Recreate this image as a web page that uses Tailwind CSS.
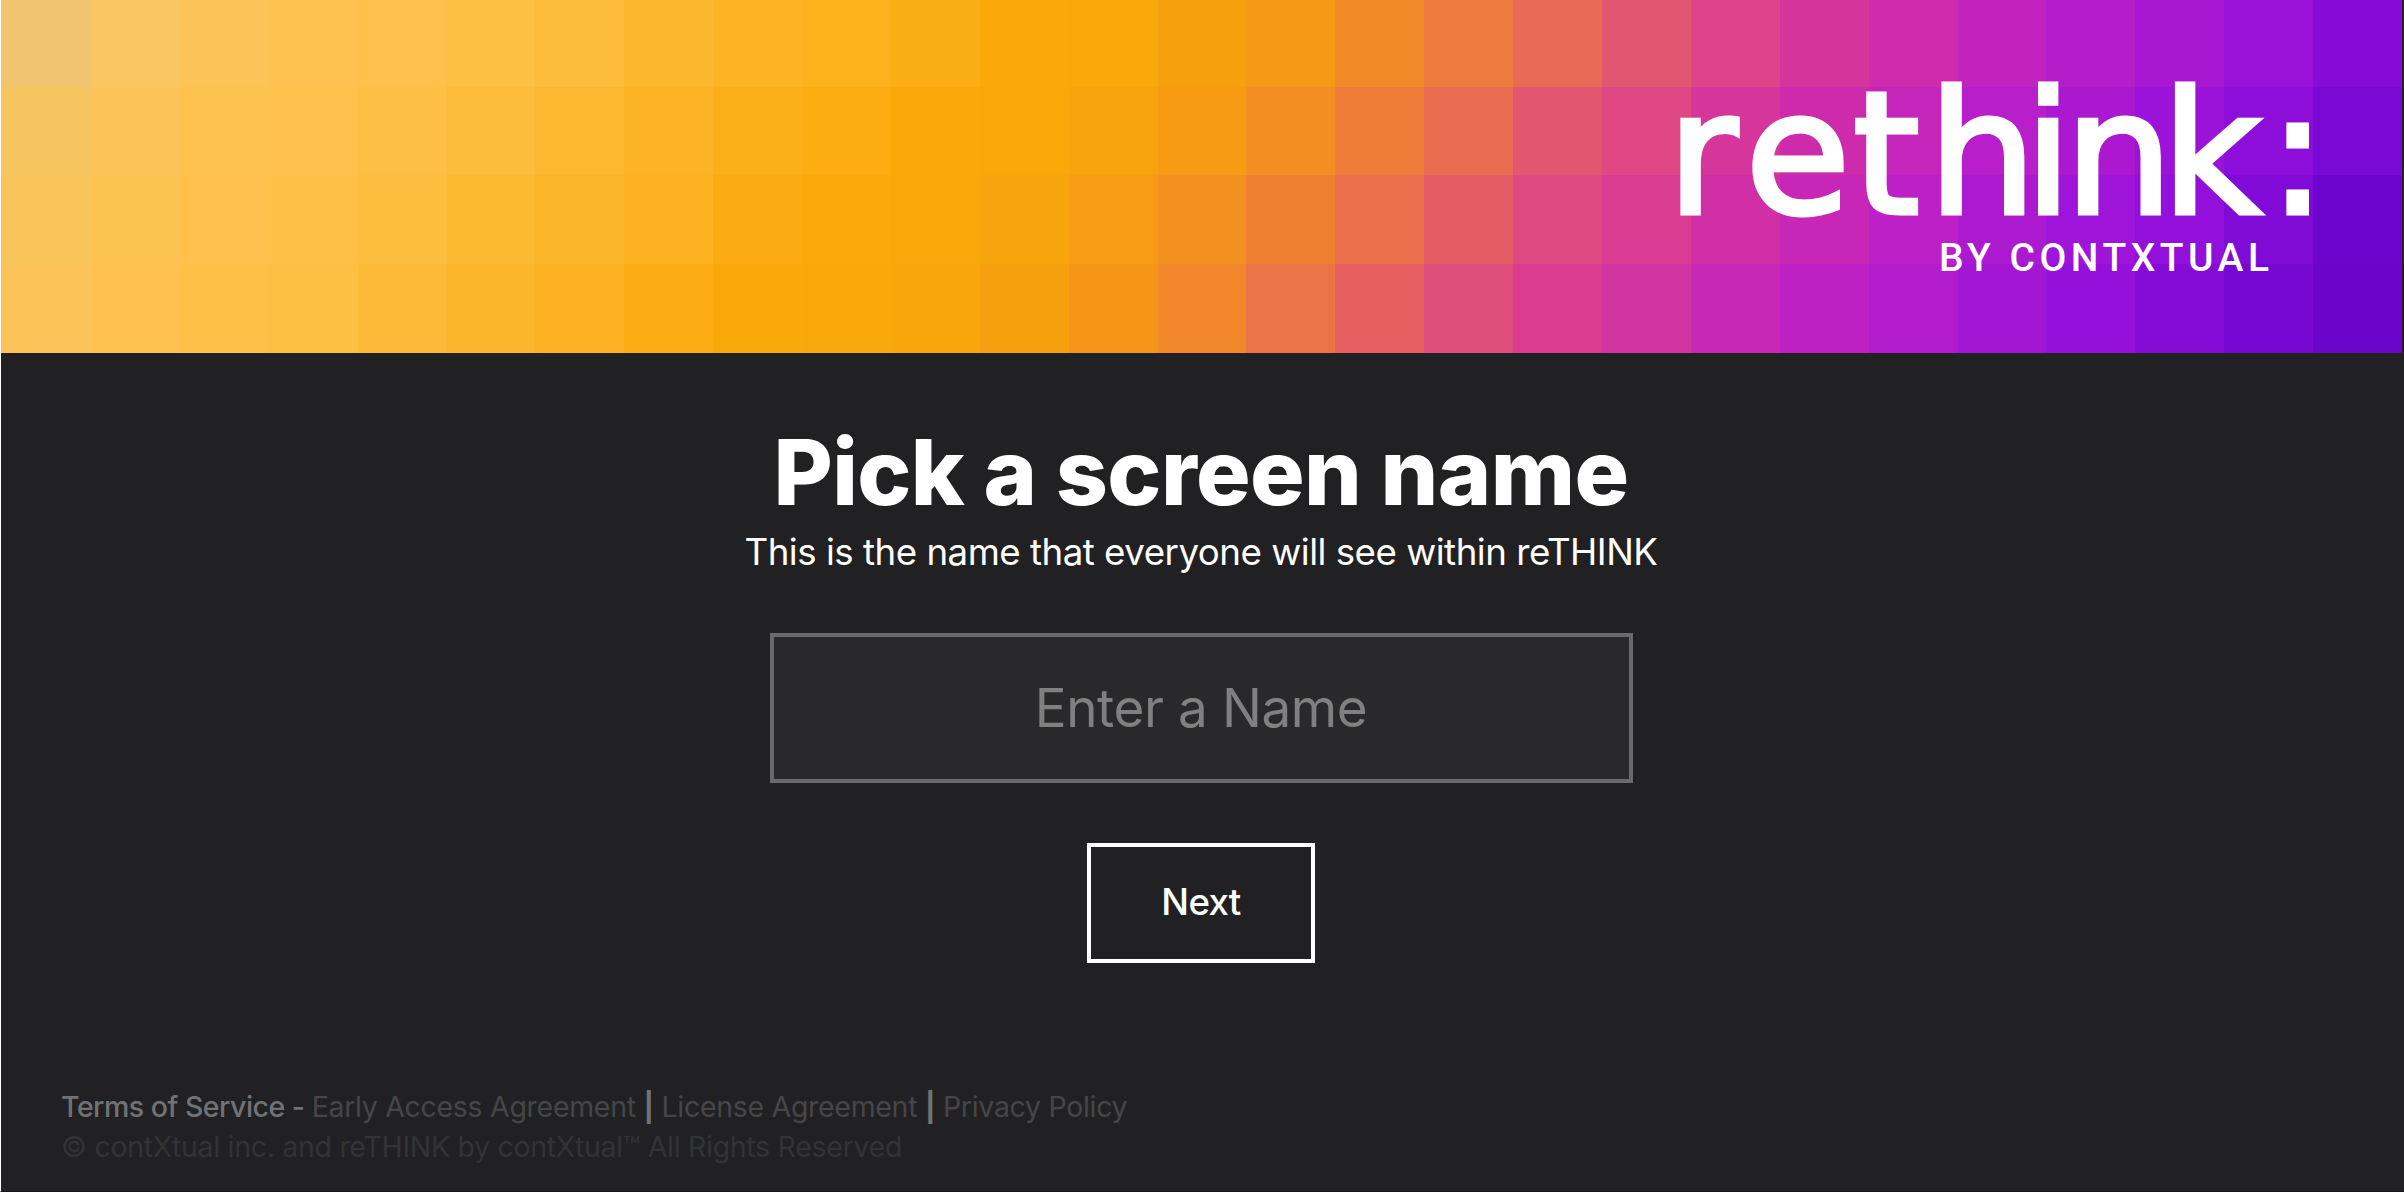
<!DOCTYPE html>
<html lang="en">

<head>
    <meta charset="UTF-8">
    <meta name="viewport" content="width=device-width, initial-scale=1">
    <title>reTHINK - Pick a screen name</title>
    <script src="https://cdn.jsdelivr.net/npm/@tailwindcss/browser@4"></script>
</head>

<body class="bg-[#212123] text-white font-['Inter',sans-serif]">
    <div class="flex h-[1192px] flex-col border-b border-l border-b-[#19161b] border-l-white">
        <!-- Header banner -->
        <header class="relative mr-0.5 h-[353px] shrink-0">
            <div id="mosaic" class="grid h-full grid-cols-[90px_repeat(26,minmax(0,1fr))] grid-rows-[87px_88px_89px_89px]"></div>
            <!-- Logo -->
            <svg class="absolute right-[58px] top-[22px] h-[290px] w-[700px] fill-white" viewBox="1644 22 700 290" role="img" aria-label="rethink: by contxtual">
                <text x="1667.5 1745.5 1853 1928.5 2024.5 2065 2162 2269" y="212.5" font-family="DejaVu Sans" font-size="170" stroke="#fff" stroke-width="5">rethink:</text>
                <text x="1939" y="270.5" font-family="Roboto" font-weight="500" font-size="39" textLength="330">BY CONTXTUAL</text>
            </svg>
        </header>

        <!-- Screen name form -->
        <main class="mr-[3px] flex flex-col items-center">
            <h1 class="mt-[66px] whitespace-nowrap text-[91px] font-extrabold leading-[106px] tracking-[-0.6px]">Pick a screen name</h1>
            <p class="mt-[4px] whitespace-nowrap text-[36.7px] leading-[46px] tracking-[-0.5px]">This is the name that everyone will see within reTHINK</p>
            <input type="text" placeholder="Enter a Name"
                class="mt-[58px] h-[150px] w-[863px] border-4 border-[#69696b] bg-[#29292b] text-center text-[53px] tracking-[-0.4px] placeholder:text-[#808080] outline-none">
            <button class="mt-[60px] h-[120px] w-[228px] border-4 border-white pb-0.5 text-[36.7px] font-medium tracking-[-0.7px]">Next</button>
        </main>

        <!-- Footer -->
        <footer class="mt-auto whitespace-nowrap pb-6 pl-[60px] text-[28.5px] leading-10 tracking-[-0.3px]">
            <p class="text-[#464648]">
                <span class="font-medium tracking-[-0.5px] text-[#727274]">Terms of Service - </span><a href="#">Early Access Agreement</a>
                <span class="font-bold text-[#727274]">|</span>
                <a href="#">License Agreement</a>
                <span class="font-bold text-[#727274]">|</span>
                <a href="#">Privacy Policy</a>
            </p>
            <p class="text-[#333335]">© contXtual inc. and reTHINK by contXtual™ All Rights Reserved</p>
        </footer>
    </div>

    <script>
        // Banner squares, row by row
        const rows = [
            '#F1C56F #F8C560 #FBC358 #FEC253 #FFC14B #FEC043 #FDBC3B #FCB72E #FCB324 #FDB21D #FBAD14 #F9A90A #F9A80A #F6A00E #F69914 #F38A29 #EE7B3D #E96A55 #E15670 #DF4389 #D5359B #CE2CAC #C222BE #B51DCA #A818D2 #9A12D9 #870BD8',
            '#F7C55F #FBC358 #FDC14E #FFC14B #FEC044 #FDBC3C #FCB830 #FCB325 #FCAF18 #FBAD12 #F9A90A #F9A80A #F7A30C #F69B13 #F38E22 #EF7D39 #E96C53 #E3566F #DF4785 #D6359B #CD2BAC #C425BA #B81ECA #AB18D0 #9B13D8 #8D0DDA #7B09D6',
            '#F9C45A #FCC353 #FFC14B #FEC045 #FDBD3E #FCB932 #FBB528 #FEB11E #FBAC12 #FAAA0D #F8A80A #F8A40C #F79C14 #F2911F #F08031 #EC704C #E65C65 #DF4A82 #DA3C93 #D12FA6 #C826B6 #BC20C6 #AC1AD0 #9E14D8 #9310DA #800AD6 #6C05CE',
            '#FCC358 #FFC24E #FEC047 #FEC043 #FDBA37 #FBB62B #FBB121 #FCAD14 #FAA90B #F8A80A #F8A60B #F6A00E #F59619 #F3872C #EB7546 #E75F60 #E04E7C #DB3C90 #D235A0 #C828B6 #BD21C4 #B21CCC #A216D4 #9510DA #850BD6 #7607D2 #6C05CC',
        ];
        const mosaic = document.getElementById('mosaic');
        rows.forEach(row => {
            row.split(' ').forEach(color => {
                const cell = document.createElement('div');
                cell.style.backgroundColor = color;
                mosaic.appendChild(cell);
            });
        });
    </script>
</body>

</html>
